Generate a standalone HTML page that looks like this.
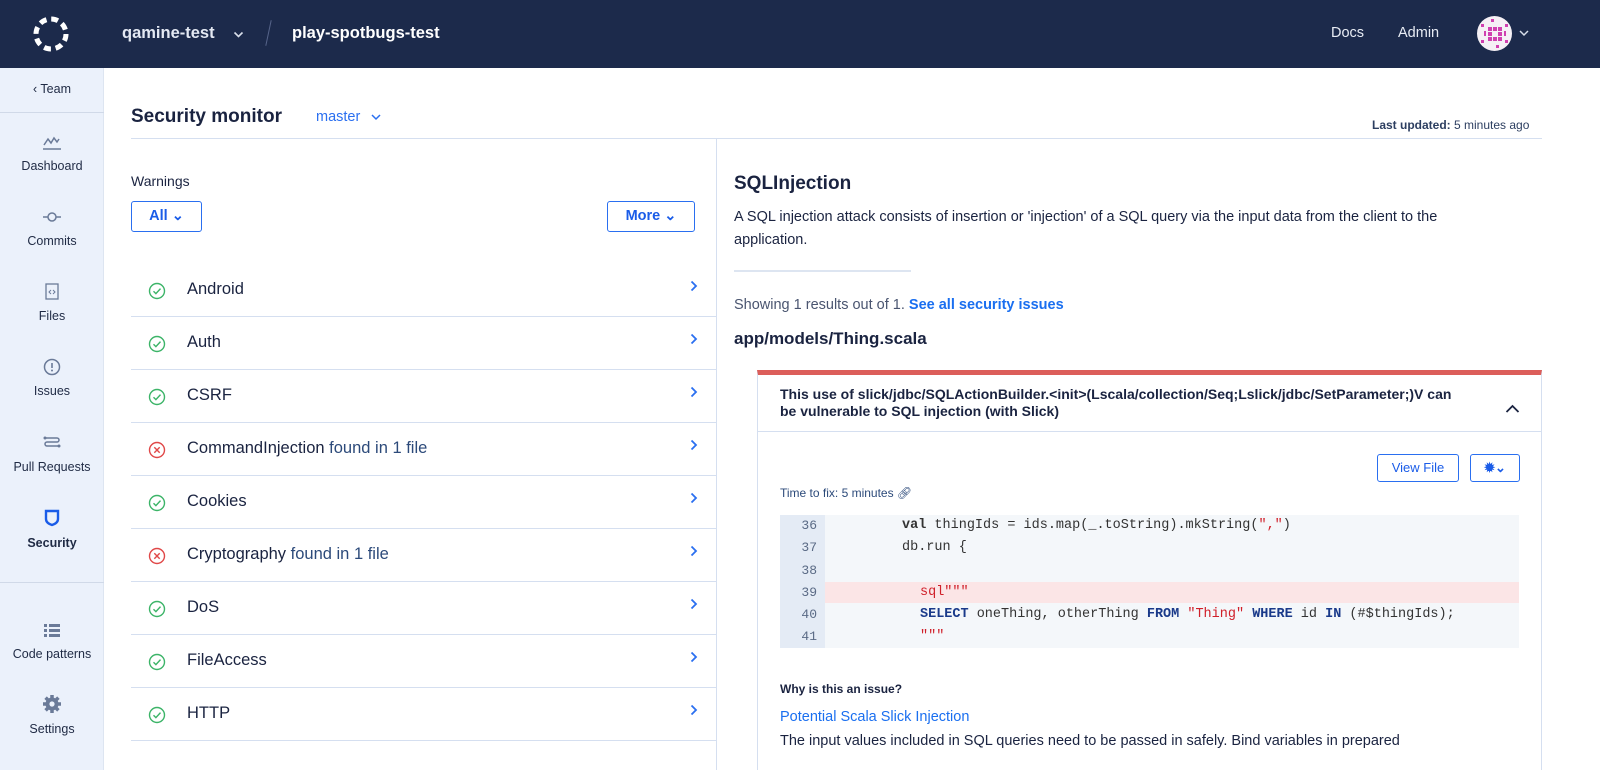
<!DOCTYPE html>
<html><head><meta charset="utf-8"><style>
*{box-sizing:border-box;margin:0;padding:0}
html,body{width:1600px;height:770px;overflow:hidden}
body{font-family:"Liberation Sans",sans-serif;color:#1a2340;background:#fff;position:relative}
.a{position:absolute;white-space:nowrap}
#top{position:absolute;left:0;top:0;width:1600px;height:68px;background:#1c2a4b}
#side{position:absolute;left:0;top:68px;width:104px;height:702px;background:#ebf1fb;border-right:1px solid #dde5f1}
.si{position:absolute;left:0;width:104px;text-align:center;font-size:12.5px;color:#1f2a44}
.ic{position:absolute;left:40px;width:24px;height:24px}
.row{position:absolute;left:131px;width:585px;height:53px;border-bottom:1px solid #d5dff0}
.row .t{position:absolute;left:56px;top:16px;font-size:16.5px;color:#1a2340}
.row .t span{color:#2c4a7a}
.row svg.s{position:absolute;left:17px;top:18px}
.row svg.ch{position:absolute;right:18px;top:16px}
.btn{position:absolute;border:1px solid #2a6ff0;border-radius:3px;color:#1a5ce8;font-weight:bold;font-size:14.5px;text-align:center}
.code{font-family:"Liberation Mono",monospace;font-size:13.5px;color:#333}
.ln{position:absolute;left:780px;width:45px;text-align:right;padding-right:8px;font-family:"Liberation Mono",monospace;font-size:13px;color:#5a6a85}
</style></head><body>
<div id="top">
  <svg class="a" style="left:32px;top:15px" width="38" height="38" viewBox="0 0 38 38"><circle cx="19" cy="19" r="15" fill="none" stroke="#fff" stroke-width="5" stroke-dasharray="7 4.8"/></svg>
  <div class="a" style="left:122px;top:24px;font-size:16.5px;font-weight:bold;color:#e4e9f3">qamine-test</div>
  <svg class="a" style="left:233px;top:31px" width="11" height="8"><path d="M1.5 1.5l4 4 4-4" stroke="#d8deea" stroke-width="1.6" fill="none"/></svg>
  <div class="a" style="left:268px;top:20px;width:1px;height:26px;background:#56648a;transform:rotate(12deg)"></div>
  <div class="a" style="left:292px;top:24px;font-size:16.5px;font-weight:bold;color:#fff">play-spotbugs-test</div>
  <div class="a" style="left:1331px;top:25px;font-size:14.5px;color:#e8ecf4">Docs</div>
  <div class="a" style="left:1398px;top:25px;font-size:14.5px;color:#e8ecf4">Admin</div>
  <div class="a" style="left:1488px;top:20px;width:1px;height:27px;background:#56648a"></div>
  <div class="a" style="left:1477px;top:16px;width:35px;height:35px;border-radius:50%;background:#f5f0f5;overflow:hidden">
    <svg width="35" height="35"><g fill="#d040b0"><rect x="11" y="11" width="4" height="4"/><rect x="16" y="11" width="4" height="4"/><rect x="21" y="11" width="4" height="4"/><rect x="11" y="16" width="4" height="4"/><rect x="21" y="16" width="4" height="4"/><rect x="11" y="21" width="4" height="4"/><rect x="16" y="21" width="4" height="4"/><rect x="21" y="21" width="4" height="4"/><rect x="4" y="8" width="3" height="3"/><rect x="28" y="8" width="3" height="3"/><rect x="4" y="24" width="3" height="3"/><rect x="28" y="24" width="3" height="3"/><rect x="14" y="3" width="3" height="3"/><rect x="19" y="29" width="3" height="3"/><rect x="7" y="15" width="2" height="5"/><rect x="27" y="15" width="2" height="5"/></g></svg>
  </div>
  <svg class="a" style="left:1519px;top:30px" width="10" height="7"><path d="M1 1l4 4 4-4" stroke="#d8deea" stroke-width="1.5" fill="none"/></svg>
</div>

<div id="side">
  <div class="si" style="top:14px;font-size:12.5px">‹ Team</div>
  <div class="a" style="left:0;top:44px;width:104px;height:1px;background:#d0d9e8"></div>
  <svg class="ic" style="top:62px" viewBox="0 0 24 24"><path d="M4 15l4-6 3 4 3-5 3 4 2-3" stroke="#6a7a98" stroke-width="1.5" fill="none"/><path d="M3 19h18" stroke="#6a7a98" stroke-width="1.5"/></svg>
  <div class="si" style="top:91px">Dashboard</div>
  <svg class="ic" style="top:137px" viewBox="0 0 24 24"><circle cx="12" cy="12" r="4" stroke="#6a7a98" stroke-width="1.5" fill="none"/><path d="M3 12h5M16 12h5" stroke="#6a7a98" stroke-width="1.5"/></svg>
  <div class="si" style="top:166px">Commits</div>
  <svg class="ic" style="top:212px" viewBox="0 0 24 24"><rect x="6" y="4" width="12" height="15" stroke="#6a7a98" stroke-width="1.3" fill="none"/><path d="M11 10l-2 2 2 2M13 10l2 2-2 2" stroke="#6a7a98" stroke-width="1" fill="none"/></svg>
  <div class="si" style="top:241px">Files</div>
  <svg class="ic" style="top:287px" viewBox="0 0 24 24"><circle cx="12" cy="12" r="7.5" stroke="#6a7a98" stroke-width="1.5" fill="none"/><path d="M12 8v5" stroke="#6a7a98" stroke-width="1.6"/><circle cx="12" cy="15.5" r="1" fill="#6a7a98"/></svg>
  <div class="si" style="top:316px">Issues</div>
  <svg class="ic" style="top:362px" viewBox="0 0 24 24"><path d="M5 8h12a2 2 0 0 1 0 4H7a2 2 0 0 0 0 4h12" stroke="#6a7a98" stroke-width="1.5" fill="none"/><circle cx="5" cy="8" r="1.5" fill="#6a7a98"/><circle cx="19" cy="16" r="1.5" fill="#6a7a98"/></svg>
  <div class="si" style="top:392px">Pull Requests</div>
  <svg class="ic" style="top:438px" viewBox="0 0 24 24"><path d="M6 5h12v8c0 3-3 5-6 6-3-1-6-3-6-6z" stroke="#1a5ce8" stroke-width="2.4" fill="none"/></svg>
  <div class="si" style="top:468px;font-weight:bold">Security</div>
  <div class="a" style="left:0;top:514px;width:104px;height:1px;background:#d0d9e8"></div>
  <svg class="ic" style="top:550px" viewBox="0 0 24 24"><g fill="#6a7a98"><rect x="4" y="6" width="3" height="3"/><rect x="9" y="6" width="11" height="3"/><rect x="4" y="11" width="3" height="3"/><rect x="9" y="11" width="11" height="3"/><rect x="4" y="16" width="3" height="3"/><rect x="9" y="16" width="11" height="3"/></g></svg>
  <div class="si" style="top:579px">Code patterns</div>
  <svg class="ic" style="top:624px" viewBox="0 0 24 24"><g fill="#6a7a98"><circle cx="12" cy="12" r="6.5"/><g stroke="#6a7a98" stroke-width="3.5"><path d="M12 3v18M3 12h18M5.6 5.6l12.8 12.8M18.4 5.6L5.6 18.4"/></g></g><circle cx="12" cy="12" r="2.6" fill="#ebf1fb"/></svg>
  <div class="si" style="top:654px">Settings</div>
</div>

<div class="a" style="left:131px;top:106px;font-size:19px;font-weight:bold;color:#1a2340">Security monitor</div>
<div class="a" style="left:316px;top:109px;font-size:14.5px;color:#2a6ff0">master</div>
<svg class="a" style="left:371px;top:114px" width="10" height="7"><path d="M1 1l4 4 4-4" stroke="#2a6ff0" stroke-width="1.5" fill="none"/></svg>
<div class="a" style="left:1372px;top:118px;font-size:12px;color:#2c3e60"><b>Last updated:</b> 5 minutes ago</div>
<div class="a" style="left:131px;top:138px;width:1411px;height:1px;background:#d5dff0"></div>
<div class="a" style="left:716px;top:138px;width:1px;height:632px;background:#d5dff0"></div>

<div class="a" style="left:131px;top:173px;font-size:14px;color:#1a2340">Warnings</div>
<div class="btn" style="left:131px;top:201px;width:71px;height:31px;line-height:29px">All ⌄</div>
<div class="btn" style="left:607px;top:201px;width:88px;height:31px;line-height:29px">More ⌄</div>

<svg width="0" height="0" style="position:absolute"><defs>
<symbol id="ok" viewBox="0 0 18 18"><circle cx="9" cy="9" r="7.5" stroke="#3cb468" stroke-width="1.4" fill="none"/><path d="M5.5 9.2l2.4 2.4 4.6-5" stroke="#3cb468" stroke-width="1.4" fill="none"/></symbol>
<symbol id="bad" viewBox="0 0 18 18"><circle cx="9" cy="9" r="7.5" stroke="#e04848" stroke-width="1.4" fill="none"/><path d="M6.3 6.3l5.4 5.4M11.7 6.3l-5.4 5.4" stroke="#e04848" stroke-width="1.4"/></symbol>
<symbol id="chv" viewBox="0 0 8 12"><path d="M1.5 1.5l4.5 4.5-4.5 4.5" stroke="#2a6ff0" stroke-width="1.8" fill="none"/></symbol>
</defs></svg>

<div class="row" style="top:264px"><svg class="s" width="18" height="18"><use href="#ok"/></svg><div class="t">Android</div><svg class="ch" width="8" height="12"><use href="#chv"/></svg></div>
<div class="row" style="top:317px"><svg class="s" width="18" height="18"><use href="#ok"/></svg><div class="t">Auth</div><svg class="ch" width="8" height="12"><use href="#chv"/></svg></div>
<div class="row" style="top:370px"><svg class="s" width="18" height="18"><use href="#ok"/></svg><div class="t">CSRF</div><svg class="ch" width="8" height="12"><use href="#chv"/></svg></div>
<div class="row" style="top:423px"><svg class="s" width="18" height="18"><use href="#bad"/></svg><div class="t">CommandInjection <span>found in 1 file</span></div><svg class="ch" width="8" height="12"><use href="#chv"/></svg></div>
<div class="row" style="top:476px"><svg class="s" width="18" height="18"><use href="#ok"/></svg><div class="t">Cookies</div><svg class="ch" width="8" height="12"><use href="#chv"/></svg></div>
<div class="row" style="top:529px"><svg class="s" width="18" height="18"><use href="#bad"/></svg><div class="t">Cryptography <span>found in 1 file</span></div><svg class="ch" width="8" height="12"><use href="#chv"/></svg></div>
<div class="row" style="top:582px"><svg class="s" width="18" height="18"><use href="#ok"/></svg><div class="t">DoS</div><svg class="ch" width="8" height="12"><use href="#chv"/></svg></div>
<div class="row" style="top:635px"><svg class="s" width="18" height="18"><use href="#ok"/></svg><div class="t">FileAccess</div><svg class="ch" width="8" height="12"><use href="#chv"/></svg></div>
<div class="row" style="top:688px"><svg class="s" width="18" height="18"><use href="#ok"/></svg><div class="t">HTTP</div><svg class="ch" width="8" height="12"><use href="#chv"/></svg></div>

<div class="a" style="left:734px;top:173px;font-size:19px;font-weight:bold;color:#1a2340">SQLInjection</div>
<div class="a" style="left:734px;top:206px;font-size:14.5px;line-height:23px;color:#1a2340;white-space:normal;width:770px">A SQL injection attack consists of insertion or 'injection' of a SQL query via the input data from the client to the application.</div>
<div class="a" style="left:734px;top:270px;width:177px;height:2px;background:#dde5f1"></div>
<div class="a" style="left:734px;top:297px;font-size:14.5px;color:#4a5570">Showing 1 results out of 1. <b style="color:#1a6ff0">See all security issues</b></div>
<div class="a" style="left:734px;top:329px;font-size:17px;font-weight:bold;color:#1a2340">app/models/Thing.scala</div>

<div class="a" style="left:757px;top:370px;width:785px;height:400px;border:1px solid #d5dff0;border-bottom:none;border-top:5px solid #dc5e5a"></div>
<div class="a" style="left:780px;top:386px;font-size:14px;font-weight:bold;line-height:17px;color:#1a2340">This use of slick/jdbc/SQLActionBuilder.&lt;init&gt;(Lscala/collection/Seq;Lslick/jdbc/SetParameter;)V can<br>be vulnerable to SQL injection (with Slick)</div>
<svg class="a" style="left:1505px;top:404px" width="15" height="10"><path d="M1.5 8l6-6 6 6" stroke="#1a2340" stroke-width="1.8" fill="none"/></svg>
<div class="a" style="left:758px;top:431px;width:783px;height:1px;background:#d5dff0"></div>
<div class="btn" style="left:1377px;top:454px;width:82px;height:28px;line-height:26px;font-size:13px;font-weight:normal">View File</div>
<div class="btn" style="left:1470px;top:454px;width:50px;height:28px;line-height:26px;font-size:13px">✹⌄</div>
<div class="a" style="left:780px;top:486px;font-size:12px;color:#2c4a7a">Time to fix: 5 minutes 🔗︎</div>

<div class="a" style="left:780px;top:515px;width:739px;height:133px;background:#f4f7fa"></div>
<div class="a" style="left:780px;top:515px;width:45px;height:133px;background:#e4ebf5"></div>
<div class="a" style="left:825px;top:582px;width:694px;height:21px;background:#fbe5e6"></div>
<div class="ln" style="top:518px">36</div><div class="ln" style="top:540px">37</div><div class="ln" style="top:563px">38</div><div class="ln" style="top:585px">39</div><div class="ln" style="top:607px">40</div><div class="ln" style="top:629px">41</div>
<div class="a code" style="left:902px;top:518px"><b>val</b> thingIds = ids.map(_.toString).mkString(<span style="color:#d0202a">","</span>)</div>
<div class="a code" style="left:902px;top:540px">db.run {</div>
<div class="a code" style="left:920px;top:585px;color:#d0202a">sql"""</div>
<div class="a code" style="left:920px;top:607px"><b style="color:#1a3a8a">SELECT</b> oneThing, otherThing <b style="color:#1a3a8a">FROM</b> <span style="color:#d0202a">"Thing"</span> <b style="color:#1a3a8a">WHERE</b> id  <b style="color:#1a3a8a">IN</b> (#$thingIds);</div>
<div class="a code" style="left:920px;top:629px;color:#d0202a">"""</div>

<div class="a" style="left:780px;top:682px;font-size:12px;font-weight:bold;color:#1a2340">Why is this an issue?</div>
<div class="a" style="left:780px;top:709px;font-size:14.5px;color:#1a6ff0">Potential Scala Slick Injection</div>
<div class="a" style="left:780px;top:733px;font-size:14.5px;color:#1a2340">The input values included in SQL queries need to be passed in safely. Bind variables in prepared</div>
</body></html>
